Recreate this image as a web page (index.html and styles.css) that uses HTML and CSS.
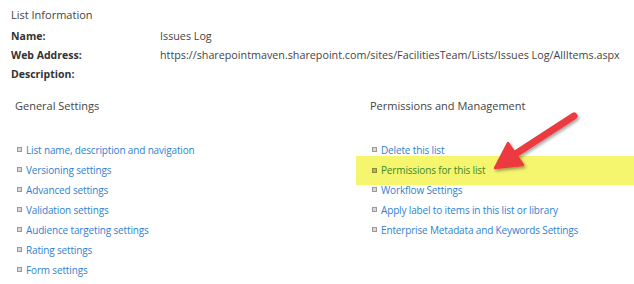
FILE: index.html
```html
<!DOCTYPE html>
<html>
<head>
<meta charset="utf-8">
<link rel="stylesheet" href="styles.css">
</head>
<body>
<div class="page">
  <section class="info">
    <div class="info-title">List Information</div>
    <div class="info-grid">
      <div class="label">Name:</div><div class="value">Issues Log</div>
      <div class="label">Web Address:</div><div class="value">https://sharepointmaven.sharepoint.com/sites/FacilitiesTeam/Lists/Issues Log/AllItems.aspx</div>
      <div class="label">Description:</div><div class="value"></div>
    </div>
  </section>
  <section class="settings">
    <div class="col col-left">
      <div class="col-title">General Settings</div>
      <ul class="links">
        <li><a>List name, description and navigation</a></li>
        <li><a>Versioning settings</a></li>
        <li><a>Advanced settings</a></li>
        <li><a>Validation settings</a></li>
        <li><a>Audience targeting settings</a></li>
        <li><a>Rating settings</a></li>
        <li><a>Form settings</a></li>
      </ul>
    </div>
    <div class="col col-right">
      <div class="col-title">Permissions and Management</div>
      <ul class="links">
        <li><a>Delete this list</a></li>
        <li class="hl"><a>Permissions for this list</a></li>
        <li><a>Workflow Settings</a></li>
        <li><a>Apply label to items in this list or library</a></li>
        <li><a>Enterprise Metadata and Keywords Settings</a></li>
      </ul>
    </div>
  </section>
  <svg class="arrow" width="120" height="90" viewBox="0 0 120 90">
    <defs>
      <filter id="sh" x="-20%" y="-20%" width="150%" height="150%">
        <feDropShadow dx="1.5" dy="2" stdDeviation="1.5" flood-color="#000" flood-opacity="0.35"/>
      </filter>
    </defs>
    <g filter="url(#sh)">
      <line x1="97" y1="12" x2="40" y2="49" stroke="#ec3b3f" stroke-width="7" stroke-linecap="round"/>
      <polygon points="18,64 31,39 46,61" fill="#ec3b3f" stroke="#ec3b3f" stroke-width="2.5" stroke-linejoin="round"/>
    </g>
  </svg>
</div>
</body>
</html>
```
FILE: styles.css
```css
html, body {
  margin: 0;
  padding: 0;
  background: #fff;
}
.page {
  position: relative;
  width: 634px;
  height: 284px;
  overflow: hidden;
  font-family: "Open Sans", "Noto Sans", sans-serif;
  font-size: 10.5px;
  color: #444;
}
.info {
  padding: 7px 0 0 11px;
}
.info-title {
  font-size: 11px;
  color: #444;
  line-height: 16px;
}
.info-grid {
  display: grid;
  grid-template-columns: 149px auto;
  grid-auto-rows: 18.7px;
  margin-top: 4px;
  align-items: center;
}
.label {
  font-weight: 700;
  color: #333;
  font-size: 10.5px;
}
.value {
  color: #444;
  white-space: nowrap;
  font-size: 10.75px;
}
.settings {
  display: flex;
  margin-top: 15px;
}
.col-left {
  width: 355px;
  padding-left: 15px;
}
.col-right {
  flex: 1;
}
.col-title {
  font-size: 11px;
  color: #444;
  line-height: 16px;
}
.links {
  list-style: none;
  margin: 25.5px 0 0 0;
  padding: 0;
}
.links li {
  display: flex;
  align-items: center;
  height: 20px;
  padding-left: 2px;
}
.links li::before {
  content: "";
  width: 3px;
  height: 3px;
  border: 1px solid #9a9a9a;
  background: #d8d8d8;
  margin-right: 4px;
  flex: none;
}
.links a {
  color: #2f7fd0;
  font-size: 10px;
  letter-spacing: -0.15px;
  white-space: nowrap;
}
.links li.hl {
  background: #f6f56e;
  margin-left: -14px;
  padding-left: 16px;
  height: 29px;
  margin-top: -4px;
  margin-bottom: -5px;
}
.links li.hl::before {
  border-color: #8a8a3a;
  background: #b7b35a;
}
.links li.hl a {
  color: #3a8a2a;
}
.arrow {
  position: absolute;
  left: 477px;
  top: 104px;
}
```
